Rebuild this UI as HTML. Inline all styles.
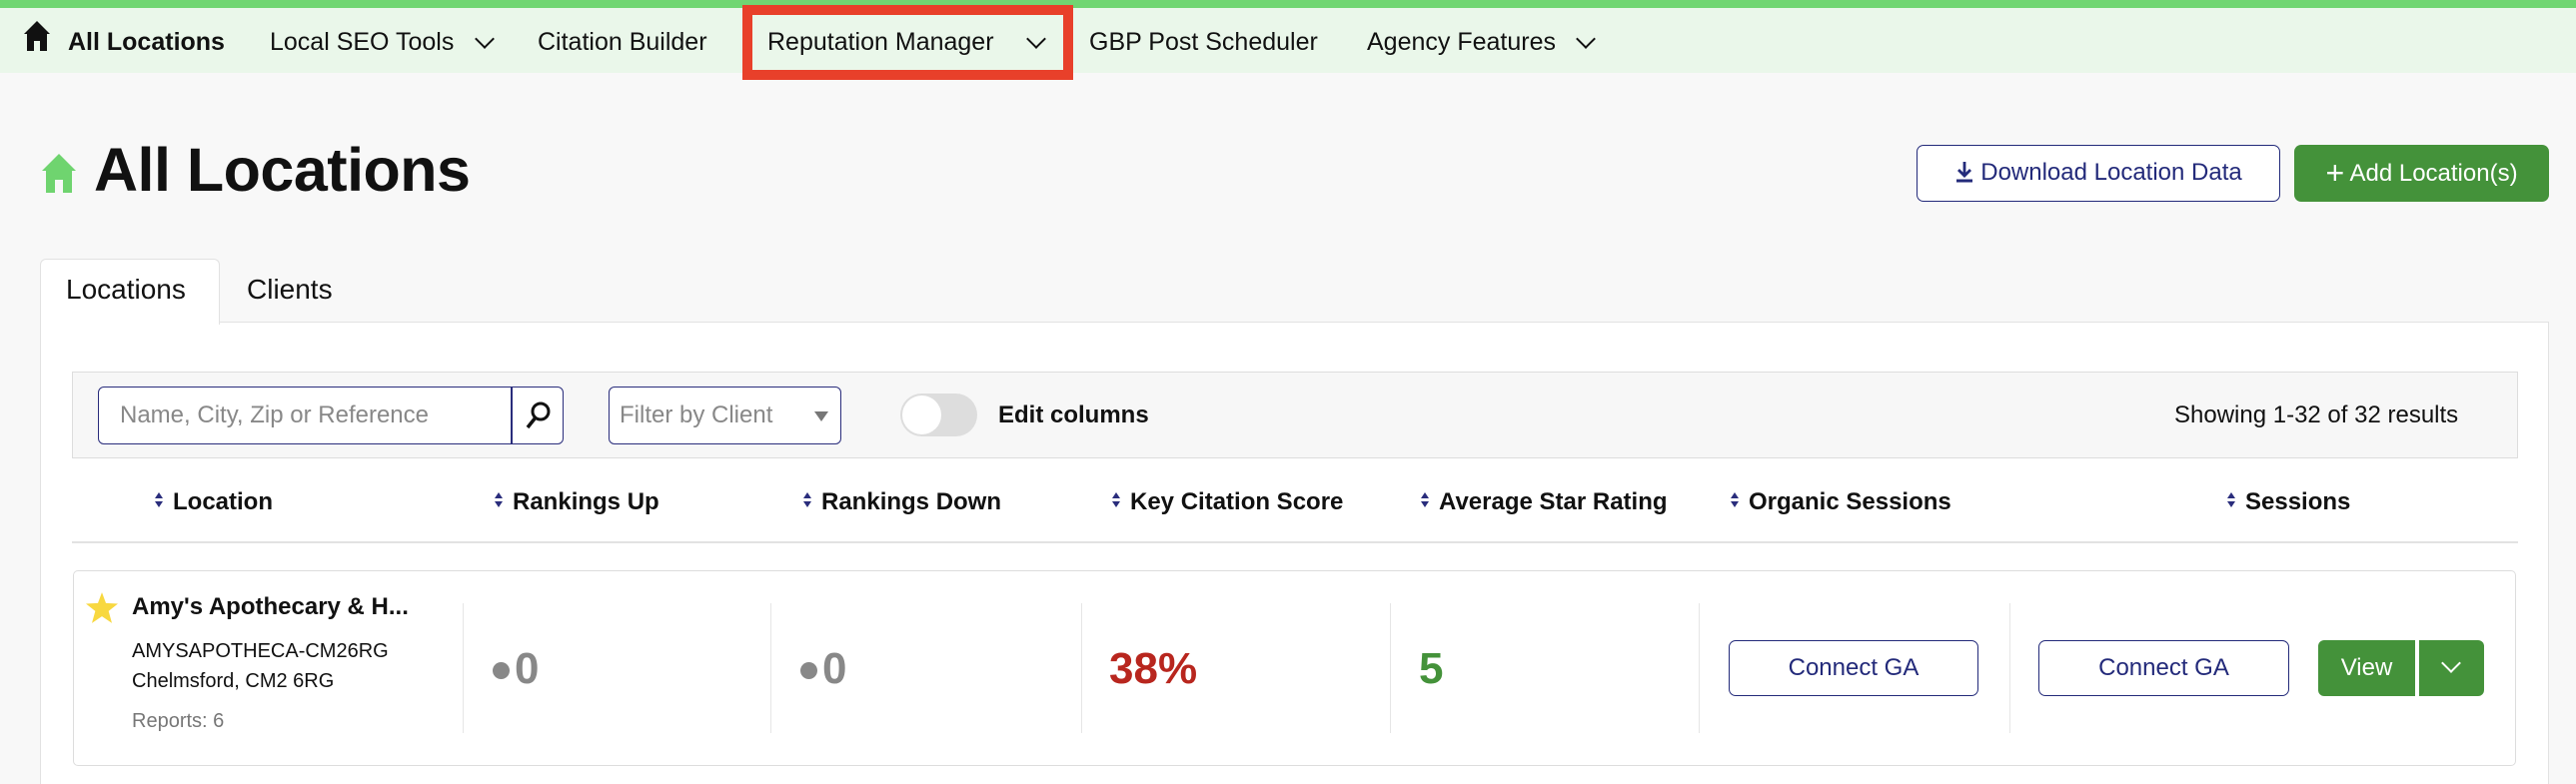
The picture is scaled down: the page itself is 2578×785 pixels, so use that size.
<!DOCTYPE html>
<html><head><meta charset="utf-8">
<style>
*{box-sizing:border-box;margin:0;padding:0}
html,body{width:2578px;height:785px;overflow:hidden}
body{background:#f8f8f8;font-family:"Liberation Sans",sans-serif;color:#111;position:relative}
.a{position:absolute;white-space:nowrap}
.nav{position:absolute;left:0;top:0;width:2578px;height:73px;background:#eaf7ea;border-top:8px solid #70d672}
.nv{position:absolute;top:27px;font-size:25px;color:#111;line-height:30px}
.chev{position:absolute;width:14px;height:14px;border-right:2.5px solid #111;border-bottom:2.5px solid #111;transform:rotate(45deg)}
.btnO{position:absolute;border:1.5px solid #232a7a;border-radius:7px;background:#fff;color:#232a7a;font-size:24px;text-align:center}
.hdr{position:absolute;top:488px;font-size:24px;font-weight:bold;line-height:30px}
.sort{display:inline-block;width:8px;margin-right:10px;vertical-align:middle;position:relative;top:-3px}
.vd{position:absolute;top:604px;width:1px;height:130px;background:#e6e6e6}
.big{position:absolute;top:643px;font-size:44px;font-weight:bold;line-height:54px}
.dot{display:inline-block;width:17px;height:17px;border-radius:50%;background:#888;margin-right:5px;vertical-align:4px}
</style></head><body>
<div class="nav"></div>
<svg class="a" style="left:23px;top:20px" width="28" height="32" viewBox="0 0 28 32"><path d="M14 1 L27 14 L24 14 L24 31 L17 31 L17 21 L11 21 L11 31 L4 31 L4 14 L1 14 Z" fill="#111"/></svg>
<div class="nv" style="left:68px;font-weight:bold">All Locations</div>
<div class="nv" style="left:270px">Local SEO Tools</div><div class="chev" style="left:478px;top:32px"></div>
<div class="nv" style="left:538px">Citation Builder</div>
<div class="a" style="left:743px;top:5px;width:331px;height:75px;border:10px solid #e8402a"></div>
<div class="nv" style="left:768px">Reputation Manager</div><div class="chev" style="left:1030px;top:32px"></div>
<div class="nv" style="left:1090px">GBP Post Scheduler</div>
<div class="nv" style="left:1368px">Agency Features</div><div class="chev" style="left:1580px;top:32px"></div>

<svg class="a" style="left:41px;top:153px" width="36" height="40" viewBox="0 0 36 40"><path d="M18 1 L35 18 L31 18 L31 40 L22 40 L22 27 L14 27 L14 40 L5 40 L5 18 L1 18 Z" fill="#6fd46f"/></svg>
<div class="a" style="left:94px;top:135px;font-size:61px;font-weight:bold;letter-spacing:-0.5px;line-height:70px">All Locations</div>

<div class="btnO" style="left:1918px;top:145px;width:364px;height:57px;line-height:54px"><svg width="20" height="24" viewBox="0 0 20 24" style="vertical-align:-4px;margin-right:6px"><path d="M10 2 V16 M4 10 L10 16 L16 10" stroke="#232a7a" stroke-width="2.8" fill="none"/><path d="M2 21 H18" stroke="#232a7a" stroke-width="3"/></svg>Download Location Data</div>
<div class="a" style="left:2296px;top:145px;width:255px;height:57px;background:#44923a;border-radius:7px;color:#fff;font-size:24px;text-align:center;line-height:57px"><span style="font-size:32px;vertical-align:-3px">+</span> Add Location(s)</div>

<div class="a" style="left:40px;top:259px;width:180px;height:66px;background:#fff;border:1.5px solid #e2e2e2;border-bottom:none;border-radius:6px 6px 0 0;z-index:2"></div>
<div class="a" style="left:66px;top:274px;font-size:28px;z-index:3">Locations</div>
<div class="a" style="left:247px;top:274px;font-size:28px">Clients</div>
<div class="a" style="left:40px;top:322px;width:2511px;height:463px;background:#fff;border:1.5px solid #e2e2e2;border-bottom:none"></div>

<div class="a" style="left:72px;top:372px;width:2448px;height:87px;background:#f7f7f7;border:1.5px solid #ddd"></div>
<div class="a" style="left:98px;top:387px;width:466px;height:58px;background:#fff;border:1.5px solid #2a2d7c;border-radius:6px"></div>
<div class="a" style="left:511px;top:387px;width:1.5px;height:58px;background:#2a2d7c"></div>
<div class="a" style="left:120px;top:402px;font-size:24px;color:#888">Name, City, Zip or Reference</div>
<svg class="a" style="left:524px;top:400px" width="30" height="32" viewBox="0 0 30 32"><circle cx="17" cy="12" r="8" stroke="#111" stroke-width="3" fill="none"/><path d="M12 18 L4 28" stroke="#111" stroke-width="3.5"/></svg>
<div class="a" style="left:609px;top:387px;width:233px;height:58px;background:#fff;border:1.5px solid #2a2d7c;border-radius:6px"></div>
<div class="a" style="left:620px;top:402px;font-size:24px;color:#888">Filter by Client</div>
<div class="a" style="left:815px;top:412px;border-left:7px solid transparent;border-right:7px solid transparent;border-top:10px solid #777"></div>
<div class="a" style="left:901px;top:394px;width:77px;height:43px;background:#ddd;border-radius:22px"></div>
<div class="a" style="left:903px;top:396px;width:39px;height:39px;background:#fff;border-radius:50%"></div>
<div class="a" style="left:999px;top:402px;font-size:24px;font-weight:bold">Edit columns</div>
<div class="a" style="left:2176px;top:402px;font-size:24px">Showing 1-32 of 32 results</div>

<svg width="0" height="0" style="position:absolute"><defs><g id="s"><path d="M4 0 L8 6 L0 6Z M0 9 L8 9 L4 15Z" fill="#2a2d7c"/></g></defs></svg>
<div class="hdr" style="left:155px"><svg class="sort" width="8" height="15"><use href="#s"/></svg>Location</div>
<div class="hdr" style="left:495px"><svg class="sort" width="8" height="15"><use href="#s"/></svg>Rankings Up</div>
<div class="hdr" style="left:804px"><svg class="sort" width="8" height="15"><use href="#s"/></svg>Rankings Down</div>
<div class="hdr" style="left:1113px"><svg class="sort" width="8" height="15"><use href="#s"/></svg>Key Citation Score</div>
<div class="hdr" style="left:1422px"><svg class="sort" width="8" height="15"><use href="#s"/></svg>Average Star Rating</div>
<div class="hdr" style="left:1732px"><svg class="sort" width="8" height="15"><use href="#s"/></svg>Organic Sessions</div>
<div class="hdr" style="left:2229px"><svg class="sort" width="8" height="15"><use href="#s"/></svg>Sessions</div>
<div class="a" style="left:72px;top:542px;width:2448px;height:2px;background:#e2e2e2"></div>

<div class="a" style="left:73px;top:571px;width:2445px;height:196px;border:1.5px solid #ddd;border-radius:5px;background:#fff"></div>
<svg class="a" style="left:86px;top:593px" width="32" height="31" viewBox="0 0 24 23"><path d="M12 0 L15 8 L24 8.5 L17 14 L19.5 23 L12 18 L4.5 23 L7 14 L0 8.5 L9 8 Z" fill="#f8d840"/></svg>
<div class="a" style="left:132px;top:594px;font-size:24px;font-weight:bold">Amy's Apothecary &amp; H...</div>
<div class="a" style="left:132px;top:641px;font-size:20px">AMYSAPOTHECA-CM26RG</div>
<div class="a" style="left:132px;top:671px;font-size:20px">Chelmsford, CM2 6RG</div>
<div class="a" style="left:132px;top:711px;font-size:20px;color:#777">Reports: 6</div>
<div class="vd" style="left:463px"></div><div class="vd" style="left:771px"></div><div class="vd" style="left:1082px"></div><div class="vd" style="left:1391px"></div><div class="vd" style="left:1700px"></div><div class="vd" style="left:2011px"></div>
<div class="big" style="left:493px;color:#888"><span class="dot"></span>0</div>
<div class="big" style="left:801px;color:#888"><span class="dot"></span>0</div>
<div class="big" style="left:1110px;color:#b8261e">38%</div>
<div class="big" style="left:1420px;color:#44923a">5</div>
<div class="btnO" style="left:1730px;top:641px;width:250px;height:56px;line-height:53px">Connect GA</div>
<div class="btnO" style="left:2040px;top:641px;width:251px;height:56px;line-height:53px">Connect GA</div>
<div class="a" style="left:2320px;top:641px;width:97px;height:56px;background:#44923a;border-radius:6px 0 0 6px;color:#fff;font-size:24px;text-align:center;line-height:56px">View</div>
<div class="a" style="left:2421px;top:641px;width:65px;height:56px;background:#44923a;border-radius:0 6px 6px 0"></div>
<div class="chev" style="left:2446px;top:657px;border-color:#fff;width:14px;height:14px"></div>
</body></html>
